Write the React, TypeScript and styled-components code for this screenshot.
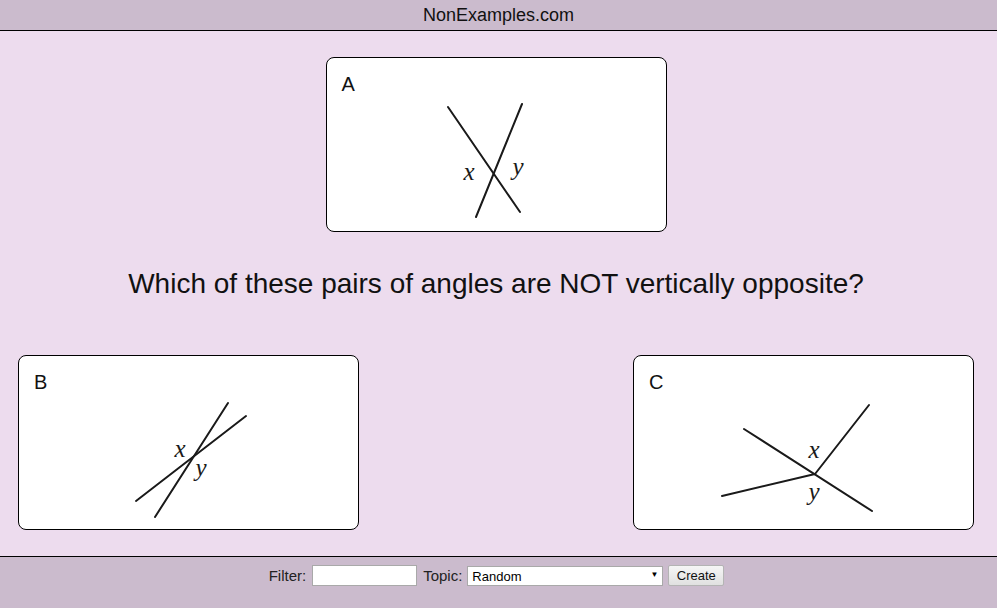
import styled, { createGlobalStyle } from "styled-components";

type Line = [number, number, number, number];
type Label = { text: string; x: number; y: number };
type Figure = { letter: string; lines: Line[]; labels: Label[] };

const figA: Figure = {
  letter: "A",
  lines: [
    [121, 49, 193, 154],
    [195, 46, 149, 159],
  ],
  labels: [
    { text: "x", x: 142, y: 122 },
    { text: "y", x: 191, y: 117 },
  ],
};

const figB: Figure = {
  letter: "B",
  lines: [
    [117, 145, 227, 60],
    [136, 161, 209, 47],
  ],
  labels: [
    { text: "x", x: 161, y: 101 },
    { text: "y", x: 182, y: 120 },
  ],
};

const figC: Figure = {
  letter: "C",
  lines: [
    [110, 73, 238, 155],
    [88, 140, 181, 118],
    [181, 118, 235, 49],
  ],
  labels: [
    { text: "x", x: 180, y: 102 },
    { text: "y", x: 180, y: 144 },
  ],
};

const GlobalStyle = createGlobalStyle`
  html, body {
    margin: 0;
    padding: 0;
    height: 100%;
  }
  body {
    font-family: "Liberation Sans", Arial, sans-serif;
    background: #eddcee;
  }
  #root {
    min-height: 100%;
  }
`;

const Page = styled.div`
  display: flex;
  flex-direction: column;
  height: 608px;
  background: #eddcee;
`;

const Header = styled.header`
  height: 30px;
  line-height: 30px;
  text-align: center;
  font-size: 18px;
  color: #111;
  background: #cbbbcd;
  border-bottom: 1px solid #000;
`;

const Main = styled.main`
  flex: 1;
  display: flex;
  flex-direction: column;
  padding: 26px 23px 0 18px;
`;

const TopRow = styled.div`
  display: flex;
  justify-content: center;
`;

const BottomRow = styled.div`
  display: flex;
  justify-content: space-between;
`;

const Question = styled.h1`
  margin: 37px 0 56px;
  height: 30px;
  line-height: 30px;
  text-align: center;
  font-size: 28px;
  font-weight: normal;
  color: #111;
`;

const Card = styled.div`
  box-sizing: border-box;
  width: 341px;
  height: 175px;
  background: #fff;
  border: 1px solid #000;
  border-radius: 8px;
  display: grid;
  overflow: hidden;
`;

const Letter = styled.span`
  grid-area: 1 / 1;
  align-self: start;
  justify-self: start;
  margin: 16px 0 0 15px;
  font-size: 20px;
  line-height: 20px;
  color: #111;
`;

const Drawing = styled.svg`
  grid-area: 1 / 1;
  width: 339px;
  height: 173px;
`;

const Footer = styled.footer`
  height: 52px;
  background: #cbbbcd;
  border-top: 1px solid #000;
  display: flex;
  justify-content: center;
  align-items: flex-start;
  padding: 8px 4px 0 0;
  box-sizing: border-box;
  font-size: 15px;
  color: #222;
  gap: 5px;
`;

const FieldLabel = styled.label`
  line-height: 22px;
`;

const TextInput = styled.input`
  box-sizing: border-box;
  width: 105px;
  height: 21px;
  border: 1px solid #a9a9a9;
  background: #fff;
  padding: 1px 2px;
  margin: 0 1px 0 1px;
`;

const SelectWrap = styled.div`
  position: relative;
  margin-top: 1px;
`;

const Select = styled.select`
  box-sizing: border-box;
  display: block;
  width: 196px;
  height: 20px;
  border: 1px solid #a9a9a9;
  background: #fff;
  appearance: none;
  font-family: "Liberation Sans", Arial, sans-serif;
  font-size: 13px;
  color: #000;
  padding: 0 4px;
`;

const Arrow = styled.span`
  position: absolute;
  right: 5px;
  top: 4px;
  font-size: 8px;
  line-height: 10px;
  color: #000;
  pointer-events: none;
`;

const Button = styled.button`
  box-sizing: border-box;
  height: 21px;
  width: 56px;
  border: 1px solid #b4b4b4;
  border-radius: 2px;
  background: linear-gradient(#f6f6f6, #e0e0e0);
  font-family: "Liberation Sans", Arial, sans-serif;
  font-size: 13px;
  color: #111;
  padding: 0 6px;
`;

const FigureCard = ({ fig }: { fig: Figure }) => (
  <Card>
    <Drawing viewBox="0 0 339 173">
      {fig.lines.map(([x1, y1, x2, y2], i) => (
        <line
          key={i}
          x1={x1}
          y1={y1}
          x2={x2}
          y2={y2}
          stroke="#1a1a1a"
          strokeWidth={2}
          strokeLinecap="round"
        />
      ))}
      {fig.labels.map((l) => (
        <text
          key={l.text}
          x={l.x}
          y={l.y}
          textAnchor="middle"
          fontFamily='"Liberation Serif", "Times New Roman", serif'
          fontStyle="italic"
          fontSize={25}
          fill="#1a1a1a"
        >
          {l.text}
        </text>
      ))}
    </Drawing>
    <Letter>{fig.letter}</Letter>
  </Card>
);

export default function App() {
  return (
    <Page>
      <GlobalStyle />
      <Header>NonExamples.com</Header>
      <Main>
        <TopRow>
          <FigureCard fig={figA} />
        </TopRow>
        <Question>Which of these pairs of angles are NOT vertically opposite?</Question>
        <BottomRow>
          <FigureCard fig={figB} />
          <FigureCard fig={figC} />
        </BottomRow>
      </Main>
      <Footer>
        <FieldLabel htmlFor="filter">Filter:</FieldLabel>
        <TextInput id="filter" type="text" />
        <FieldLabel htmlFor="topic">Topic:</FieldLabel>
        <SelectWrap>
          <Select id="topic" defaultValue="Random">
            <option>Random</option>
          </Select>
          <Arrow>▼</Arrow>
        </SelectWrap>
        <Button>Create</Button>
      </Footer>
    </Page>
  );
}
